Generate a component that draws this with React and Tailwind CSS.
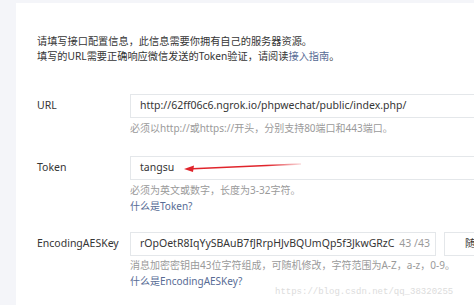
import React from "react";

const font = { fontFamily: '"Noto Sans", "Noto Sans CJK SC", sans-serif' };

function Hint({ children, className = "" }) {
  return <p className={`text-[10px] leading-[16px] text-[#9a9a9a] whitespace-nowrap ${className}`}>{children}</p>;
}

function HelpLink({ children }) {
  return <a className="block text-[10px] leading-[16px] text-[#576b95]">{children}</a>;
}

export default function App() {
  return (
    <div
      className="relative w-[474px] h-[305px] overflow-hidden bg-[#f4f5f9] pt-[3px] pl-[16px] flex"
      style={font}
    >
      <div className="flex-1 bg-white pl-[21px] pt-[31px] text-[#353535]">
        <div className="text-[10.2px] leading-[15px]">
          <p>请填写接口配置信息，此信息需要你拥有自己的服务器资源。</p>
          <p>
            填写的URL需要正确响应微信发送的Token验证，请阅读
            <a className="text-[#576b95]">接入指南</a>。
          </p>
        </div>

        <div className="mt-[30px] flex flex-col">
          {/* URL */}
          <div className="flex">
            <div className="w-[93px] h-[24px] flex items-center text-[10.5px]">URL</div>
            <div>
              <div className="w-[400px] h-[24px] border border-[#e4e7ea] flex items-center pl-[9px] text-[10.5px]">
                http://62ff06c6.ngrok.io/phpwechat/public/index.php/
              </div>
              <Hint className="mt-[2px]">必须以http://或https://开头，分别支持80端口和443端口。</Hint>
            </div>
          </div>

          {/* Token */}
          <div className="flex mt-[20px]">
            <div className="w-[93px] h-[24px] flex items-center text-[10.5px]">Token</div>
            <div>
              <div className="relative w-[400px] h-[24px] border border-[#e4e7ea] flex items-center pl-[9px] text-[10.5px]">
                tangsu
                <svg
                  className="absolute left-[52px] top-[4px]"
                  width="120"
                  height="14"
                  viewBox="0 0 120 14"
                >
                  <defs>
                    <linearGradient id="fade" x1="0" x2="1" y1="0" y2="0">
                      <stop offset="0" stopColor="#e0242b" />
                      <stop offset="0.7" stopColor="#e0242b" />
                      <stop offset="1" stopColor="#e0242b" stopOpacity="0.15" />
                    </linearGradient>
                  </defs>
                  <path d="M4 8 L118 3" stroke="url(#fade)" strokeWidth="1.6" fill="none" />
                  <path d="M1 8 L11 4.5 L10 11 Z" fill="#e0242b" />
                </svg>
              </div>
              <Hint className="mt-[2px]">必须为英文或数字，长度为3-32字符。</Hint>
              <HelpLink>什么是Token?</HelpLink>
            </div>
          </div>

          {/* EncodingAESKey */}
          <div className="flex mt-[18px]">
            <div className="w-[93px] h-[24px] flex items-center text-[10.5px]">EncodingAESKey</div>
            <div>
              <div className="flex">
                <div className="w-[306px] h-[24px] border border-[#e4e7ea] flex items-center justify-between pl-[9px] pr-[5px] text-[10.5px]">
                  <span>rOpOetR8IqYySBAuB7fJRrpHJvBQUmQp5f3JkwGRzC</span>
                  <span className="text-[#9a9a9a]">43 /43</span>
                </div>
                <div className="ml-[8px] w-[60px] h-[24px] border border-[#e4e7ea] flex items-center pl-[20px] text-[10.5px] whitespace-nowrap">
                  随机生成
                </div>
              </div>
              <Hint className="mt-[1px]">消息加密密钥由43位字符组成，可随机修改，字符范围为A-Z，a-z，0-9。</Hint>
              <HelpLink>什么是EncodingAESKey?</HelpLink>
            </div>
          </div>
        </div>
      </div>

      <div
        className="absolute left-[275px] top-[285px] text-[9px] leading-[14px] text-[#dcdcdc] whitespace-nowrap"
        style={{ fontFamily: '"Liberation Mono", "DejaVu Sans Mono", monospace' }}
      >
        https://blog.csdn.net/qq_38320255
      </div>
    </div>
  );
}
